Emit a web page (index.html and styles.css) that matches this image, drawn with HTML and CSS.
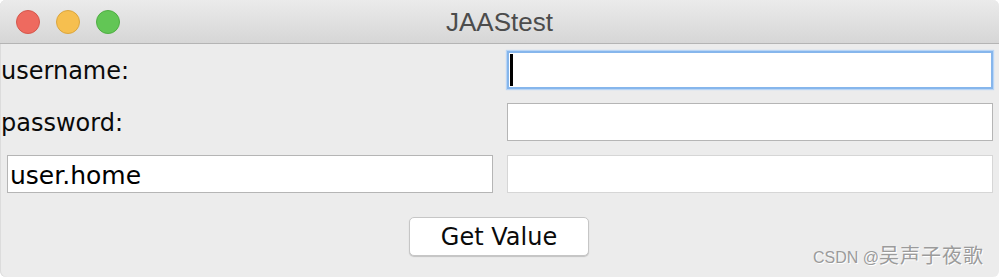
FILE: index.html
```html
<!DOCTYPE html>
<html>
<head>
<meta charset="utf-8">
<link rel="stylesheet" href="styles.css">
</head>
<body>
<div class="window">
  <div class="titlebar">
    <div class="lights">
      <span class="light red"></span>
      <span class="light yellow"></span>
      <span class="light green"></span>
    </div>
    <div class="title">JAAStest</div>
  </div>
  <div class="content">
    <div class="grid">
      <div class="cell"><span class="label">username:</span></div>
      <div class="cell"><div class="field focused"><span class="caret"></span></div></div>
      <div class="cell"><span class="label">password:</span></div>
      <div class="cell"><div class="field"></div></div>
      <div class="cell"><div class="field"><span class="value">user.home</span></div></div>
      <div class="cell"><div class="field readonly"></div></div>
    </div>
    <div class="actions">
      <button class="btn">Get Value</button>
    </div>
    <div class="watermark">CSDN @<span class="cjk">吴声子夜歌</span></div>
  </div>
</div>
</body>
</html>
```
FILE: styles.css
```css
html, body {
  margin: 0;
  padding: 0;
  background: #ffffff;
}
body {
  width: 1000px;
  height: 278px;
  overflow: hidden;
  font-family: "DejaVu Sans", sans-serif;
}
.window {
  width: 999px;
  height: 277px;
  border-radius: 6px;
  overflow: hidden;
  background: #ececec;
  display: flex;
  flex-direction: column;
  box-shadow: inset 1px 0 0 #dcdcdc;
}
.titlebar {
  height: 43px;
  flex: none;
  background: linear-gradient(#ebebeb, #d6d6d6);
  border-bottom: 1px solid #b4b4b4;
  display: flex;
  align-items: center;
  position: relative;
}
.lights {
  display: flex;
  gap: 16px;
  padding-left: 16px;
}
.light {
  width: 22px;
  height: 22px;
  border-radius: 50%;
  display: block;
}
.red { background: #ee6a5f; border: 1px solid #d5574c; }
.yellow { background: #f6bf4f; border: 1px solid #dba63e; }
.green { background: #62c655; border: 1px solid #4fae43; }
.title {
  position: absolute;
  left: 0;
  right: 0;
  top: 0;
  height: 43px;
  line-height: 44px;
  text-align: center;
  font-family: "Liberation Sans", Arial, sans-serif;
  font-size: 26px;
  color: #4c4c4c;
}
.content {
  flex: 1;
  position: relative;
  display: flex;
  flex-direction: column;
}
.grid {
  display: grid;
  grid-template-columns: 500px 499px;
  grid-auto-rows: 52px;
}
.cell {
  display: flex;
  align-items: center;
}
.label {
  font-size: 24px;
  color: #0a0a0a;
  padding-left: 1px;
  padding-top: 2px;
}
.field {
  width: 486px;
  height: 38px;
  box-sizing: border-box;
  margin-left: 7px;
  background: #fff;
  border: 1px solid #b5b5b5;
  display: flex;
  align-items: center;
}
.field.focused {
  border: 2px solid #86b6ec;
  box-shadow: 0 0 1px 1px #b9d5f5;
}
.field.readonly {
  border-color: #d6d6d6;
}
.caret {
  width: 3px;
  height: 32px;
  background: #000;
  margin-left: 1px;
}
.value {
  font-size: 25px;
  color: #000;
  padding-left: 2px;
  padding-top: 2px;
}
.actions {
  display: flex;
  justify-content: center;
  padding-top: 17px;
}
.btn {
  width: 180px;
  height: 39px;
  background: #fff;
  border: 1px solid #c6c6c6;
  border-radius: 5px;
  box-shadow: 0 1px 1px rgba(0,0,0,0.18);
  font-family: "DejaVu Sans", sans-serif;
  font-size: 24px;
  color: #0a0a0a;
  padding: 0;
  margin-left: -1px;
}
.watermark {
  position: absolute;
  right: 15px;
  bottom: 8px;
  font-family: "Liberation Sans", "Noto Sans CJK SC", sans-serif;
  font-size: 16px;
  color: #9b9b9b;
  text-shadow: 1px 1px 0 #ffffff;
  white-space: nowrap;
}
.cjk {
  font-family: "Noto Sans CJK SC", sans-serif;
  font-size: 20px;
  letter-spacing: 1px;
}
```
